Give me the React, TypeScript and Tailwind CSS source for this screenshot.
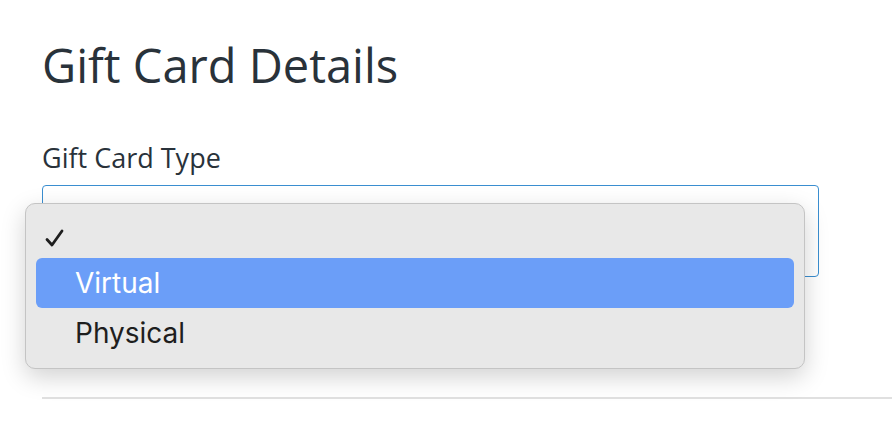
export default function App() {
  return (
    <div className="w-[892px] h-[436px] overflow-hidden bg-white" style={{ fontFamily: "'Open Sans', Lato, sans-serif" }}>
      <div className="pl-[42px] pt-[37px]">
        <h1 className="text-[47px] leading-[56px] text-[#29323a] font-normal">Gift Card Details</h1>
        <div className="mt-[49px] text-[27px] leading-[32px] text-[#29323a]">Gift Card Type</div>
        <div className="relative mt-[11px] w-[777px] h-[92px] rounded-[4px] border-[1.5px] border-[#3a8ed0] bg-white">
          <div
            className="absolute left-[-18px] top-[16.5px] w-[780px] h-[166px] rounded-[10px] border border-[#c4c4c4] bg-[#e8e8e8] shadow-[0_8px_24px_rgba(0,0,0,0.18)] px-[10px] pt-[14px]"
            style={{ fontFamily: "Inter, 'Liberation Sans', sans-serif" }}
          >
            <div className="h-[40px] flex items-start pl-[9px] pt-[11px]">
              <svg width="19" height="18" viewBox="0 0 19 18">
                <path d="M2 10.5 L7 16 L17 2" fill="none" stroke="#1e1e1e" strokeWidth="2.8" strokeLinecap="round" strokeLinejoin="round" />
              </svg>
            </div>
            <div className="h-[50px] rounded-[6px] bg-[#6b9ef8] text-white text-[28px] flex items-center pl-[39px]">Virtual</div>
            <div className="h-[50px] text-[#1e1e1e] text-[28px] flex items-center pl-[39px]">Physical</div>
          </div>
        </div>
        <div className="mt-[120px] h-[2px] bg-[#e0e0e0]" />
      </div>
    </div>
  );
}
